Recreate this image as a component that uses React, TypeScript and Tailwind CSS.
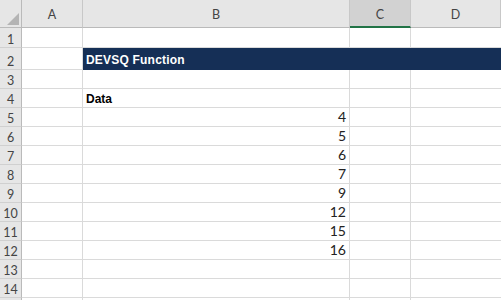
const cols = [
  { key: 'A', w: 'w-[61px]' },
  { key: 'B', w: 'w-[267px]' },
  { key: 'C', w: 'w-[61px]' },
  { key: 'D', w: 'flex-1' },
];

const data: Record<number, string> = {
  5: '4',
  6: '5',
  7: '6',
  8: '7',
  9: '9',
  10: '12',
  11: '15',
  12: '16',
};

function RowHeader({ n }: { n: number }) {
  return (
    <div className="w-[22px] shrink-0 bg-[#e6e6e6] border-r border-r-[#bababa] border-b border-b-[#d0d0d0] flex items-end justify-center pb-[1px] text-[12.5px] leading-none text-[#444]">
      {n < 15 ? n : ''}
    </div>
  );
}

export default function App() {
  const rowNums = [1, 2, 3, 4, 5, 6, 7, 8, 9, 10, 11, 12, 13, 14, 15];

  return (
    <div className="w-[501px] h-[300px] overflow-hidden bg-white font-['Lato',sans-serif] text-black">
      {/* Column headers */}
      <div className="flex h-[28px]">
        <div className="w-[22px] shrink-0 bg-[#e6e6e6] border-r border-r-[#bababa] border-b border-b-[#bababa] relative">
          <svg className="absolute left-[7px] top-[13px]" width="12" height="12" viewBox="0 0 12 12">
            <polygon points="12,0 12,12 0,12" fill="#b4b4b4" />
          </svg>
        </div>
        {cols.map((c) => (
          <div
            key={c.key}
            className={`${c.w} shrink-0 flex items-center justify-center pt-[4px] text-[12.5px] text-[#444] border-r border-r-[#c8c8c8] ${
              c.key === 'C'
                ? 'bg-[#d2d2d2] border-b-2 border-b-[#217346] text-[#2f6b55]'
                : 'bg-[#e6e6e6] border-b border-b-[#bababa]'
            }`}
          >
            {c.key}
          </div>
        ))}
      </div>

      {rowNums.map((n) => {
        const h = n === 1 ? 'h-[20px]' : n === 2 ? 'h-[22px]' : 'h-[19px]';
        if (n === 2) {
          return (
            <div key={n} className={`flex ${h}`}>
              <RowHeader n={n} />
              <div className="w-[61px] shrink-0 border-r border-b border-[#dadada]" />
              <div className="flex-1 bg-[#152f56] flex items-center pl-[3px] pt-[1px] font-['Liberation_Sans',Arial,sans-serif] font-bold text-[12px] text-white tracking-[0.2px]">
                DEVSQ Function
              </div>
            </div>
          );
        }
        return (
          <div key={n} className={`flex ${h}`}>
            <RowHeader n={n} />
            <div className="w-[61px] shrink-0 border-r border-b border-[#dadada]" />
            <div className="w-[267px] shrink-0 border-r border-b border-[#dadada] flex items-end px-[3px] pb-[2px] leading-none">
              {n === 4 && (
                <span className="font-['Liberation_Sans',Arial,sans-serif] font-bold text-[12px]">Data</span>
              )}
              {data[n] && <span className="ml-auto text-[14px] text-[#222]">{data[n]}</span>}
            </div>
            <div className="w-[61px] shrink-0 border-r border-b border-[#dadada]" />
            <div className="flex-1 border-b border-[#dadada]" />
          </div>
        );
      })}
    </div>
  );
}
